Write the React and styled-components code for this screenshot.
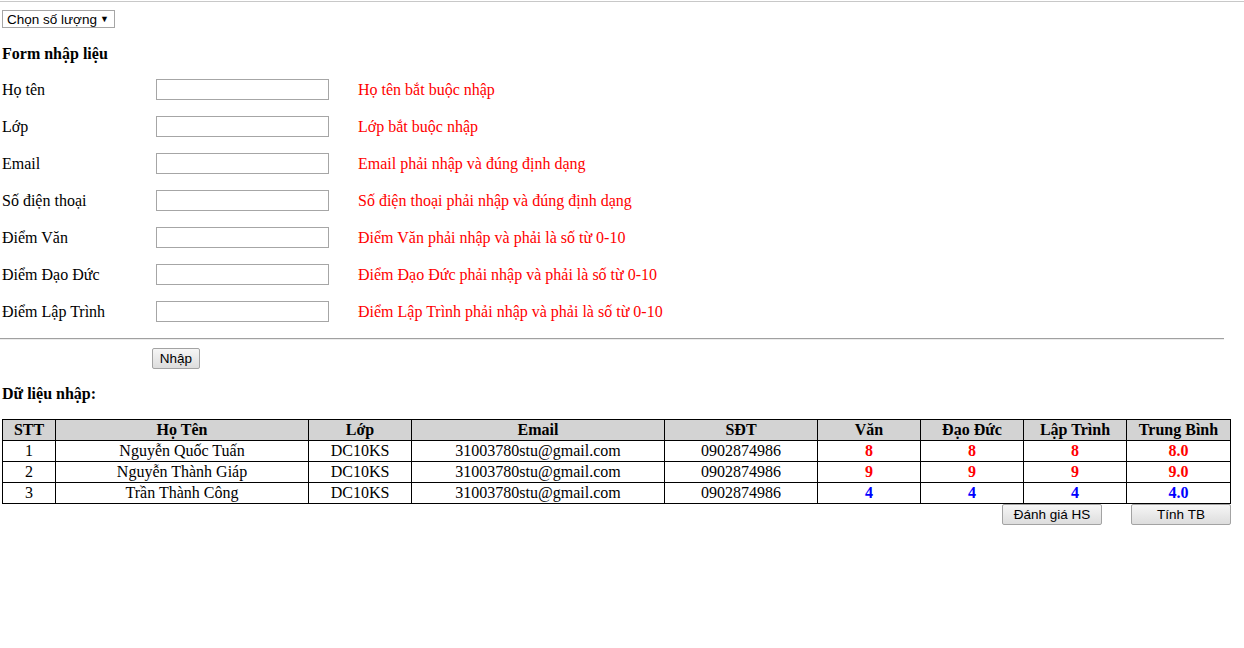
import React from 'react';
import styled, { createGlobalStyle } from 'styled-components';

const GlobalStyle = createGlobalStyle`
  html, body {
    margin: 0;
    padding: 0;
    background: #ffffff;
    font-family: "Liberation Serif", "Times New Roman", serif;
    font-size: 16px;
    color: #000;
  }
`;

const Page = styled.div`
  width: 1244px;
  min-height: 648px;
  border-top: 1px solid #c8c8c8;
  margin-top: 1px;
`;

const Body = styled.div`
  padding: 0 2px;
`;

const FakeSelect = styled.div`
  display: flex;
  align-items: center;
  justify-content: space-between;
  width: 113px;
  margin-top: 8px;
  height: 18px;
  box-sizing: border-box;
  padding: 0 5px 0 4px;
  border: 1px solid #a6a6a6;
  font-family: "Liberation Sans", Arial, sans-serif;
  font-size: 13.5px;
  color: #000;
  background: #fff;
`;

const Caret = styled.span`
  font-size: 9px;
`;

const Heading = styled.div`
  font-weight: bold;
  font-size: 16px;
  margin-top: 17px;
  height: 19px;
`;

const FormGrid = styled.div`
  margin-top: 15px;
  display: flex;
  flex-direction: column;
  gap: 16px;
`;

const FieldRow = styled.div`
  display: flex;
  align-items: center;
  height: 21px;
`;

const Label = styled.div`
  width: 154px;
  font-size: 16px;
`;

const Input = styled.input`
  width: 173px;
  height: 21px;
  box-sizing: border-box;
  border: 1px solid #a6a6a6;
  margin: 0;
  padding: 1px 2px;
`;

const ErrorText = styled.div`
  margin-left: 29px;
  color: #ff0000;
  font-size: 16px;
`;

const Rule = styled.div`
  width: 1224px;
  margin-top: 16px;
  margin-left: -2px;
  border-top: 1px solid #a0a0a0;
  border-bottom: 1px solid #ececec;
`;

const ButtonRow = styled.div`
  display: flex;
  justify-content: ${p => (p.$end ? 'flex-end' : 'flex-start')};
  gap: 29px;
  width: ${p => (p.$end ? '1229px' : 'auto')};
  padding-left: ${p => (p.$end ? '0' : '150px')};
  margin-top: ${p => p.$top || 0}px;
`;

const Button = styled.button`
  width: ${p => p.$w}px;
  height: 21px;
  box-sizing: border-box;
  margin: 0;
  padding: 0;
  border: 1px solid #a3a3a3;
  border-radius: 2px;
  background: linear-gradient(#f6f6f6, #dddddd);
  font-family: "Liberation Sans", Arial, sans-serif;
  font-size: 13.5px;
  color: #000;
`;

const SubHeading = styled.div`
  font-weight: bold;
  font-size: 16px;
  margin-top: 16px;
  height: 19px;
`;

const Table = styled.table`
  margin-top: 15px;
  width: 1228px;
  border-collapse: collapse;
  table-layout: fixed;
  font-size: 16px;
`;

const Th = styled.th`
  width: ${p => p.$w}px;
  background: #d3d3d3;
  border: 1px solid #000;
  height: 20px;
  padding: 0;
  line-height: 18px;
  font-weight: bold;
`;

const Td = styled.td`
  border: 1px solid #000;
  height: 20px;
  padding: 0;
  line-height: 18px;
  text-align: center;
  color: ${p => p.$color || '#000'};
  font-weight: ${p => (p.$color ? 'bold' : 'normal')};
`;

const columns = [
  ['STT', 52],
  ['Họ Tên', 252],
  ['Lớp', 102],
  ['Email', 252],
  ['SĐT', 152],
  ['Văn', 102],
  ['Đạo Đức', 102],
  ['Lập Trình', 102],
  ['Trung Bình', 103],
];

const fields = [
  ['Họ tên', 'Họ tên bắt buộc nhập'],
  ['Lớp', 'Lớp bắt buộc nhập'],
  ['Email', 'Email phải nhập và đúng định dạng'],
  ['Số điện thoại', 'Số điện thoại phải nhập và đúng định dạng'],
  ['Điểm Văn', 'Điểm Văn phải nhập và phải là số từ 0-10'],
  ['Điểm Đạo Đức', 'Điểm Đạo Đức phải nhập và phải là số từ 0-10'],
  ['Điểm Lập Trình', 'Điểm Lập Trình phải nhập và phải là số từ 0-10'],
];

const students = [
  { name: 'Nguyễn Quốc Tuấn', score: 8 },
  { name: 'Nguyễn Thành Giáp', score: 9 },
  { name: 'Trần Thành Công', score: 4 },
];

const scoreColor = s => (s >= 5 ? '#ff0000' : '#0000ff');

const App = () => {
  return (
    <Page>
      <GlobalStyle />
      <Body>
        <FakeSelect>
          Chọn số lượng <Caret>▼</Caret>
        </FakeSelect>
        <Heading>Form nhập liệu</Heading>
        <FormGrid>
          {fields.map(([label, msg]) => (
            <FieldRow key={label}>
              <Label>{label}</Label>
              <Input type="text" />
              <ErrorText>{msg}</ErrorText>
            </FieldRow>
          ))}
        </FormGrid>
        <Rule />
        <ButtonRow $top={8}>
          <Button $w={48}>Nhập</Button>
        </ButtonRow>
        <SubHeading>Dữ liệu nhập:</SubHeading>
        <Table>
          <thead>
            <tr>
              {columns.map(([title, w]) => (
                <Th key={title} $w={w}>{title}</Th>
              ))}
            </tr>
          </thead>
          <tbody>
            {students.map((s, i) => (
              <tr key={s.name}>
                <Td>{i + 1}</Td>
                <Td>{s.name}</Td>
                <Td>DC10KS</Td>
                <Td>31003780stu@gmail.com</Td>
                <Td>0902874986</Td>
                <Td $color={scoreColor(s.score)}>{s.score}</Td>
                <Td $color={scoreColor(s.score)}>{s.score}</Td>
                <Td $color={scoreColor(s.score)}>{s.score}</Td>
                <Td $color={scoreColor(s.score)}>{s.score.toFixed(1)}</Td>
              </tr>
            ))}
          </tbody>
        </Table>
        <ButtonRow $end>
          <Button $w={100}>Đánh giá HS</Button>
          <Button $w={100}>Tính TB</Button>
        </ButtonRow>
      </Body>
    </Page>
  );
};

export default App;
